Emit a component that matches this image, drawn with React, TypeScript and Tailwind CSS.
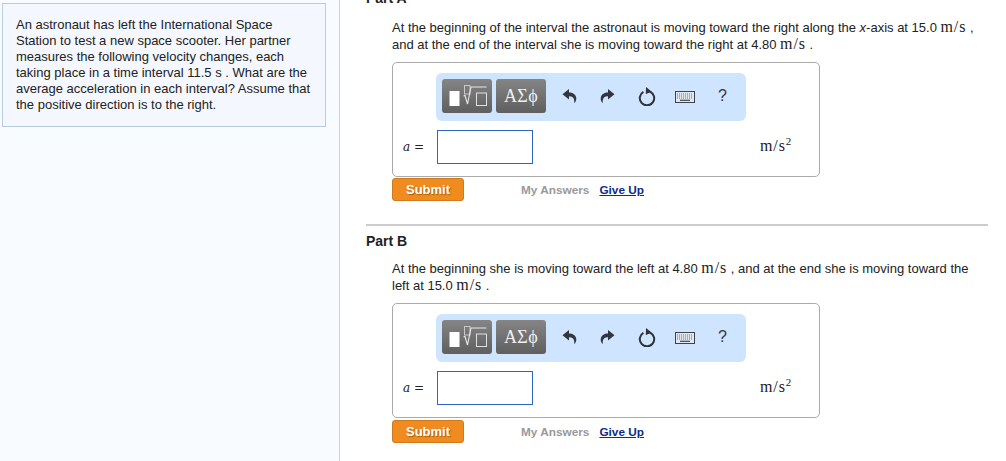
const MS = () => (
  <span className="font-['Liberation_Serif',serif] text-[16px] leading-none tracking-[0.9px]">m/s</span>
);

const UndoIcon = ({ flip }: { flip?: boolean }) => (
  <svg width="15" height="16" viewBox="0 0 15 16" className={flip ? "-scale-x-100" : ""}>
    <path
      d="M7 1 L0.5 6.2 L7 11.4 V8.2 C9.6 8 11 9 11.8 10.8 C12.3 12 12.4 13.4 12.2 15.2 C13.8 13.8 14.6 11.6 14.2 9.4 C13.7 6.4 10.8 4.4 7 4.4 Z"
      fill="#33373d"
    />
  </svg>
);

const ResetIcon = () => (
  <svg width="18" height="20" viewBox="0 0 18 20" fill="none">
    <path d="M5.4 5.9 A7.2 7.2 0 1 0 12 5.6" stroke="#2f3338" strokeWidth="2" />
    <path d="M8 1 L13.8 5.8 L7.8 8 Z" fill="#2f3338" />
  </svg>
);

const KeyboardIcon = () => (
  <svg width="20" height="12" viewBox="0 0 20 12" fill="none">
    <rect x="0.5" y="0.5" width="19" height="11" fill="#e2e8f0" stroke="#3d434b" />
    <path d="M2 3 H18 M2 5 H18 M2 7 H18" stroke="#69707a" strokeWidth="1" strokeDasharray="1 1" />
    <path d="M5 9.3 H15" stroke="#444" strokeWidth="1.2" />
  </svg>
);

const TemplatesIcon = () => (
  <svg width="40" height="26" viewBox="0 0 40 26" fill="none">
    <rect x="2.5" y="8" width="10" height="15" fill="#fff" />
    <rect x="17.5" y="2.5" width="5.5" height="8.5" stroke="#c9c9c9" strokeWidth="1" />
    <path d="M16.5 13 L18 12.5 L20.5 21 L24 4 H39.5" stroke="#e8e8e8" strokeWidth="1.1" />
    <rect x="29.5" y="10" width="10" height="12.5" stroke="#e0e0e0" strokeWidth="1" />
  </svg>
);

const AnswerBox = () => (
  <div className="h-[115px] w-[428px] rounded-[5px] border border-[#aaaaaa] bg-white">
    <div className="ml-[43px] mt-[10px] flex h-[48px] w-[310px] items-center rounded-[6px] bg-[#cfe4fe] pb-[2px] pl-[6px]">
      <div className="flex h-[34px] w-[50px] items-center justify-center rounded-[3px] bg-gradient-to-b from-[#858585] to-[#5f5f5f]">
        <TemplatesIcon />
      </div>
      <div className="ml-[4px] flex h-[34px] w-[50px] items-center justify-center rounded-[3px] bg-gradient-to-b from-[#858585] to-[#5f5f5f] font-['Liberation_Serif',serif] text-[18px] tracking-[0.4px] text-[#f0f0f0]">
        ΑΣϕ
      </div>
      <div className="ml-[16px] flex w-[15px] justify-center">
        <UndoIcon />
      </div>
      <div className="ml-[23px] flex w-[15px] justify-center">
        <UndoIcon flip />
      </div>
      <div className="ml-[23px] flex w-[18px] justify-center">
        <ResetIcon />
      </div>
      <div className="ml-[19px] flex w-[20px] justify-center pt-[2px]">
        <KeyboardIcon />
      </div>
      <div className="ml-[23px] font-['Liberation_Sans',sans-serif] text-[16px] text-[#33373d]">?</div>
    </div>
    <div className="mt-[9px] flex items-center">
      <div className="ml-[10px] w-[34px] font-['DejaVu_Serif',serif] text-[12px] text-[#222]">
        <i>a</i> =
      </div>
      <div className="h-[34px] w-[96px] border border-[#2f66c4] bg-white" />
      <div className="ml-[227px] -mt-[3px] font-['Liberation_Serif',serif] text-[16px] leading-none tracking-[0.9px] text-[#222]">
        m/s<sup className="text-[11px]">2</sup>
      </div>
    </div>
  </div>
);

const Actions = () => (
  <div className="flex items-center font-['Liberation_Sans',sans-serif] text-[11.8px] font-bold">
    <div className="flex h-[23px] w-[72px] items-center justify-center rounded-[3px] border border-[#cf7a1c] bg-[#ef8b1f] text-[13px] text-white [text-shadow:1px_1px_1px_#a85f10]">
      Submit
    </div>
    <span className="ml-[57px] text-[#999999]">My Answers</span>
    <span className="ml-[10px] text-[#0b2d8c] underline">Give Up</span>
  </div>
);

export default function App() {
  return (
    <div className="flex h-[461px] w-[1006px] overflow-hidden bg-white font-['Liberation_Sans',sans-serif] text-[13px] leading-[16px] text-[#222]">
      <aside className="h-full w-[340px] shrink-0 border-r border-[#c5d3e2] bg-[#f8fbff] pl-[2px] pt-[3px]">
        <div className="h-[124px] w-[324px] border border-[#b8cce0] bg-[#f4f8fe] pl-[13px] pr-[12px] pt-[13px]">
          An astronaut has left the International Space Station to test a new space scooter. Her partner measures the
          following velocity changes, each taking place in a time interval 11.5 s . What are the average acceleration
          in each interval? Assume that the positive direction is to the right.
        </div>
      </aside>
      <main className="-mt-[10px] pl-[26px]">
        <h2 className="text-[14px] font-bold leading-[16px] text-[#222]">Part A</h2>
        <div className="ml-[26px] mt-[13px] w-[590px]">
          <p>
            At the beginning of the interval the astronaut is moving toward the right along the <i>x</i>-axis at 15.0 <MS /> ,
            and at the end of the interval she is moving toward the right at 4.80 <MS /> .
          </p>
          <div className="mt-[9px]">
            <AnswerBox />
          </div>
          <div className="mt-[1px]">
            <Actions />
          </div>
        </div>
        <div className="mt-[23px] h-[2px] w-[622px] bg-[#cccccc]" />
        <h2 className="mt-[7px] text-[14px] font-bold leading-[16px] text-[#222]">Part B</h2>
        <div className="ml-[26px] mt-[11px] w-[590px]">
          <p>
            At the beginning she is moving toward the left at 4.80 <MS /> , and at the end she is moving toward the left
            at 15.0 <MS /> .
          </p>
          <div className="mt-[9px]">
            <AnswerBox />
          </div>
          <div className="mt-[2px]">
            <Actions />
          </div>
        </div>
      </main>
    </div>
  );
}
